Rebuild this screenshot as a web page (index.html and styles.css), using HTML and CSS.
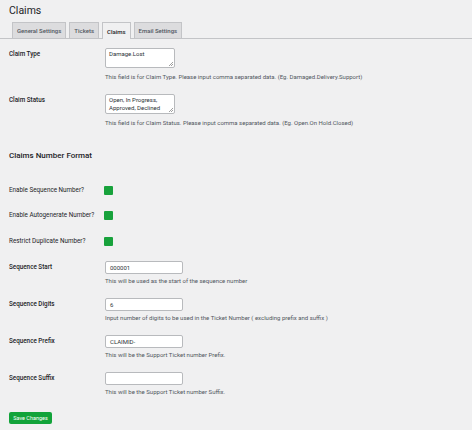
FILE: index.html
```html
<!DOCTYPE html>
<html lang="en">
<head>
<meta charset="utf-8">
<title>Claims</title>
<link rel="stylesheet" href="styles.css">
</head>
<body>
<div class="page">
  <h1 class="title">Claims</h1>
  <nav class="tabs">
    <a class="tab">General Settings</a>
    <a class="tab">Tickets</a>
    <a class="tab active">Claims</a>
    <a class="tab">Email Settings</a>
  </nav>

  <div class="row row-area first">
    <div class="lbl bold">Claim Type</div>
    <div class="field">
      <div class="area">Damage.Lost</div>
      <p class="desc">This field is for Claim Type. Please input comma separated data. (Eg. Damaged.Delivery.Support)</p>
    </div>
  </div>
  <div class="row row-area">
    <div class="lbl bold">Claim Status</div>
    <div class="field">
      <div class="area">Open, In Progress, Approved, Declined</div>
      <p class="desc">This field is for Claim Status. Please input comma separated data. (Eg. Open.On Hold.Closed)</p>
    </div>
  </div>

  <h2 class="section">Claims Number Format</h2>

  <div class="row row-check first-check">
    <div class="lbl">Enable Sequence Number?</div>
    <div class="field"><span class="check"></span></div>
  </div>
  <div class="row row-check">
    <div class="lbl">Enable Autogenerate Number?</div>
    <div class="field"><span class="check"></span></div>
  </div>
  <div class="row row-check third-check">
    <div class="lbl">Restrict Duplicate Number?</div>
    <div class="field"><span class="check"></span></div>
  </div>

  <div class="row row-input first-input">
    <div class="lbl bold">Sequence Start</div>
    <div class="field">
      <div class="input">000001</div>
      <p class="desc">This will be used as the start of the sequence number</p>
    </div>
  </div>
  <div class="row row-input">
    <div class="lbl bold">Sequence Digits</div>
    <div class="field">
      <div class="input">6</div>
      <p class="desc">Input number of digits to be used in the Ticket Number ( excluding prefix and suffix )</p>
    </div>
  </div>
  <div class="row row-input">
    <div class="lbl bold">Sequence Prefix</div>
    <div class="field">
      <div class="input">CLAIMID-</div>
      <p class="desc">This will be the Support Ticket number Prefix.</p>
    </div>
  </div>
  <div class="row row-input">
    <div class="lbl bold">Sequence Suffix</div>
    <div class="field">
      <div class="input"></div>
      <p class="desc">This will be the Support Ticket number Suffix.</p>
    </div>
  </div>

  <div class="actions">
    <button class="btn" type="button">Save Changes</button>
  </div>
</div>
</body>
</html>
```

FILE: styles.css
```css
html, body {
  margin: 0;
  padding: 0;
  background: #ffffff;
}

body {
  font-family: Roboto, "Liberation Sans", sans-serif;
  color: #1d2327;
}

.page {
  width: 472px;
  height: 430px;
  background: #f0f0f1;
  overflow: hidden;
}

.title {
  margin: 0;
  padding: 4px 0 0 9px;
  font-size: 10.5px;
  line-height: 14px;
  font-weight: 400;
  color: #1d2327;
}

.tabs {
  display: flex;
  gap: 3px;
  margin-top: 4px;
  padding-left: 12px;
  height: 16px;
  border-bottom: 1px solid #c3c4c7;
}

.tab {
  display: flex;
  align-items: center;
  height: 15px;
  padding: 0 4px;
  background: #dcdcde;
  border: 1px solid #c3c4c7;
  border-bottom: none;
  font-size: 6px;
  font-weight: 500;
  color: #50575e;
  white-space: nowrap;
}

.tab.active {
  background: #f0f0f1;
  color: #1d2327;
  height: 16px;
  margin-bottom: -1px;
}

.row {
  display: grid;
  grid-template-columns: 96px 1fr;
  padding-left: 9px;
}

.lbl {
  font-size: 6.3px;
  line-height: 9px;
  color: #1d2327;
  white-space: nowrap;
}

.bold {
  font-weight: 500;
}

.desc {
  margin: 0;
  font-size: 6px;
  line-height: 9px;
  color: #50575e;
  white-space: nowrap;
}

/* textarea rows */
.row-area {
  margin-top: 13.5px;
}

.row-area.first {
  margin-top: 9px;
}

.row-area .lbl {
  padding-top: 1.5px;
}

.area {
  position: relative;
  box-sizing: border-box;
  width: 70px;
  height: 20px;
  padding: 1px 3px;
  background: #ffffff;
  border: 1px solid #b8babd;
  border-radius: 2px;
  font-size: 6px;
  line-height: 8px;
  color: #2c3338;
}

.area::after {
  content: "";
  position: absolute;
  right: 1px;
  bottom: 1px;
  width: 4px;
  height: 4px;
  background: linear-gradient(135deg, transparent 45%, #a0a0a0 45%, #a0a0a0 55%, transparent 55%, transparent 70%, #a0a0a0 70%, #a0a0a0 80%, transparent 80%);
}

.row-area .desc {
  margin-top: 3.5px;
}

/* section title */
.section {
  margin: 23px 0 0 9px;
  font-size: 8px;
  line-height: 12px;
  font-weight: 500;
  color: #1d2327;
}

/* checkbox rows */
.row-check {
  align-items: center;
  margin-top: 16px;
}

.row-check.first-check {
  margin-top: 24px;
}

.row-check.third-check {
  margin-top: 17px;
}

.check {
  display: block;
  width: 9px;
  height: 9px;
  margin-left: -1px;
  background: #18a23c;
  border-radius: 1px;
}

/* input rows */
.row-input {
  margin-top: 13px;
}

.row-input.first-input {
  margin-top: 15px;
}

.row-input .lbl {
  padding-top: 2px;
}

.input {
  box-sizing: border-box;
  width: 78px;
  height: 13px;
  padding: 0 4px;
  background: #ffffff;
  border: 1px solid #b8babd;
  border-radius: 2px;
  font-size: 6px;
  line-height: 11px;
  color: #2c3338;
}

.row-input .desc {
  margin-top: 2px;
}

.actions {
  margin-top: 16px;
  padding-left: 9px;
}

.btn {
  display: block;
  width: 43px;
  height: 12px;
  padding: 0;
  border: none;
  border-radius: 2px;
  background: #12a33a;
  color: #ffffff;
  font-family: inherit;
  font-size: 5.5px;
  line-height: 12px;
}
```
